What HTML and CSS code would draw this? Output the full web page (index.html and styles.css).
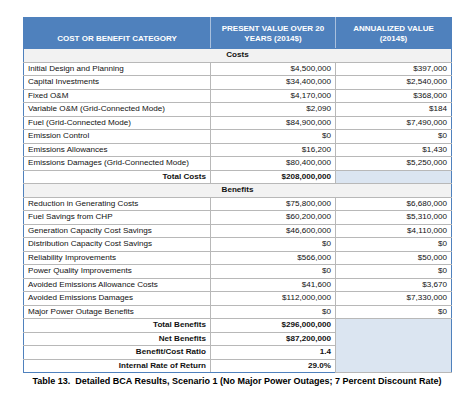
FILE: index.html
```html
<!DOCTYPE html>
<html>
<head>
<meta charset="utf-8">
<link rel="stylesheet" href="styles.css">
</head>
<body>
<div class="wrap">
<table class="bca">
  <colgroup><col class="c1"><col class="c2"><col class="c3"></colgroup>
  <thead>
    <tr class="head">
      <th class="cat">COST OR BENEFIT CATEGORY</th>
      <th>PRESENT VALUE OVER 20<br>YEARS (2014$)</th>
      <th>ANNUALIZED VALUE<br>(2014$)</th>
    </tr>
  </thead>
  <tbody>
    <tr class="sec"><td colspan="3">Costs</td></tr>
    <tr><td>Initial Design and Planning</td><td class="n">$4,500,000</td><td class="n">$397,000</td></tr>
    <tr><td>Capital Investments</td><td class="n">$34,400,000</td><td class="n">$2,540,000</td></tr>
    <tr><td>Fixed O&amp;M</td><td class="n">$4,170,000</td><td class="n">$368,000</td></tr>
    <tr><td>Variable O&amp;M (Grid-Connected Mode)</td><td class="n">$2,090</td><td class="n">$184</td></tr>
    <tr><td>Fuel (Grid-Connected Mode)</td><td class="n">$84,900,000</td><td class="n">$7,490,000</td></tr>
    <tr><td>Emission Control</td><td class="n">$0</td><td class="n">$0</td></tr>
    <tr><td>Emissions Allowances</td><td class="n">$16,200</td><td class="n">$1,430</td></tr>
    <tr><td>Emissions Damages (Grid-Connected Mode)</td><td class="n">$80,400,000</td><td class="n">$5,250,000</td></tr>
    <tr class="tot"><td class="n">Total Costs</td><td class="n">$208,000,000</td><td class="blank"></td></tr>
    <tr class="sec"><td colspan="3">Benefits</td></tr>
    <tr><td>Reduction in Generating Costs</td><td class="n">$75,800,000</td><td class="n">$6,680,000</td></tr>
    <tr><td>Fuel Savings from CHP</td><td class="n">$60,200,000</td><td class="n">$5,310,000</td></tr>
    <tr><td>Generation Capacity Cost Savings</td><td class="n">$46,600,000</td><td class="n">$4,110,000</td></tr>
    <tr><td>Distribution Capacity Cost Savings</td><td class="n">$0</td><td class="n">$0</td></tr>
    <tr><td>Reliability Improvements</td><td class="n">$566,000</td><td class="n">$50,000</td></tr>
    <tr><td>Power Quality Improvements</td><td class="n">$0</td><td class="n">$0</td></tr>
    <tr><td>Avoided Emissions Allowance Costs</td><td class="n">$41,600</td><td class="n">$3,670</td></tr>
    <tr><td>Avoided Emissions Damages</td><td class="n">$112,000,000</td><td class="n">$7,330,000</td></tr>
    <tr><td>Major Power Outage Benefits</td><td class="n">$0</td><td class="n">$0</td></tr>
    <tr class="tot"><td class="n">Total Benefits</td><td class="n">$296,000,000</td><td class="blank" rowspan="4"></td></tr>
    <tr class="tot"><td class="n">Net Benefits</td><td class="n">$87,200,000</td></tr>
    <tr class="tot"><td class="n">Benefit/Cost Ratio</td><td class="n">1.4</td></tr>
    <tr class="tot"><td class="n">Internal Rate of Return</td><td class="n">29.0%</td></tr>
  </tbody>
</table>
<p class="caption">Table 13.&nbsp; Detailed BCA Results, Scenario 1 (No Major Power Outages; 7 Percent Discount Rate)</p>
</div>
</body>
</html>
```
FILE: styles.css
```css
html, body {
  margin: 0;
  padding: 0;
  background: #ffffff;
}
.wrap {
  padding: 17px 0 0 23px;
  width: 428px;
  font-family: "Liberation Sans", Arial, sans-serif;
  color: #000;
}
.bca {
  border-collapse: collapse;
  width: 428px;
  table-layout: fixed;
  font-size: 8.1px;
  border: 1px solid #4f81bd;
}
.c1 { width: 187px; }
.c2 { width: 125px; }
.c3 { width: 116px; }
.bca td {
  border: 1px solid #b8b8b8;
  padding: 0 4px;
  height: 12.5px;
  line-height: 12.5px;
  white-space: nowrap;
  color: #111;
}
.head th {
  background: #4f81bd;
  color: #ffffff;
  font-weight: bold;
  font-size: 8px;
  line-height: 10px;
  height: 26px;
  padding: 0 2px 4px;
  border: 1px solid #4f81bd;
  border-right: 1px solid #a9c0dd;
  text-align: center;
  vertical-align: bottom;
}
.head th:last-child { border-right: 1px solid #4f81bd; }
.sec td {
  background: #f2f2f2;
  font-weight: bold;
  text-align: center;
}
.n { text-align: right; }
.tot td { font-weight: bold; }
.bca td.blank {
  background: #dbe5f1;
}
.bca tr:last-child td { border-bottom-color: #4f81bd; }
.bca td:first-child { border-left-color: #4f81bd; }
.bca td:last-child, .bca td.blank { border-right-color: #4f81bd; }
.caption {
  margin: 3px 0 0;
  text-align: center;
  font-weight: bold;
  font-size: 9px;
  line-height: 11px;
  white-space: nowrap;
}
```
